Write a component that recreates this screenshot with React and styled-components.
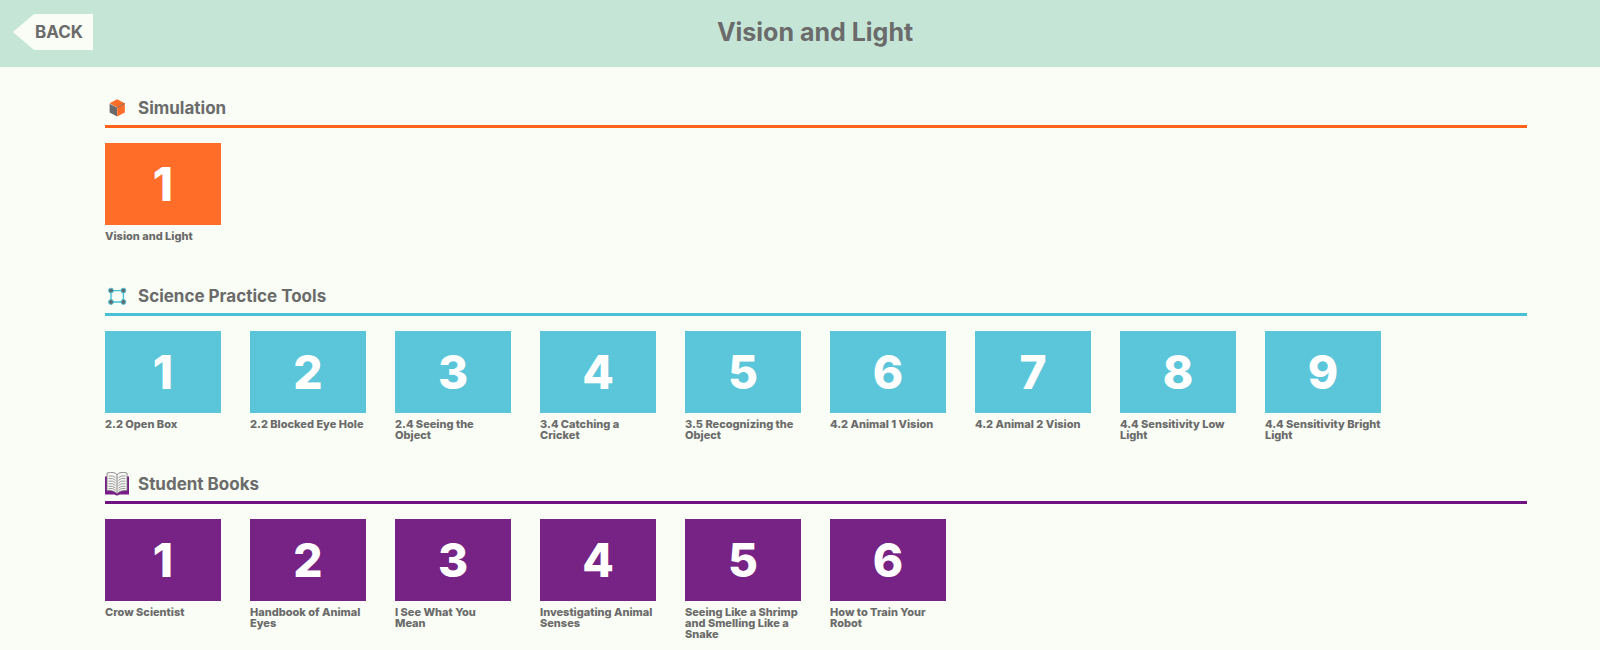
import React from "react"
import styled, { createGlobalStyle, ThemeProvider } from "styled-components"

const theme = {
    paper: "#f9fdf5",
    mint: "#c5e6d7",
    text: "#6b6b6b",
    orange: "#ff6d29",
    orangeLine: "#ff6319",
    aqua: "#5bc6d9",
    aquaLine: "#46c1d6",
    purple: "#762385",
    purpleLine: "#6f1380",
}

const GlobalStyle = createGlobalStyle`
    * {
        box-sizing: border-box;
    }

    body {
        margin: 0;
        background: ${theme.paper};
        color: ${theme.text};
        font-family: Inter, "Open Sans", sans-serif;
        font-weight: 700;
    }

    h1, h2, p, ul {
        margin: 0;
        padding: 0;
    }
`
const Header = styled.header`
    display: grid;
    grid-template-columns: 1fr auto 1fr;
    align-items: center;
    min-height: 67px;
    padding: 0 13px;
    background: ${props => props.theme.mint};
`
const BackButton = styled.button`
    justify-self: start;
    height: 36px;
    margin-bottom: 3px;
    padding: 0 10px 0 22px;
    border: 0;
    background: ${props => props.theme.paper};
    clip-path: polygon(0 50%, 21px 0, 100% 0, 100% 100%, 21px 100%);
    color: ${props => props.theme.text};
    font: inherit;
    font-size: 17px;
    cursor: pointer;
`
const Title = styled.h1`
    margin-bottom: 3px;
    padding-left: 30px;
    font-size: 25px;
    line-height: 30px;
`
const Main = styled.main`
    padding: 22px 73px 0 105px;
`
const Section = styled.section`
    padding-bottom: 13px;
`
const Heading = styled.div`
    display: flex;
    align-items: center;
    gap: 9px;
    height: 39px;
    padding-top: 2px;
    border-bottom: 3px solid ${({ theme, $color }) => theme[`${$color}Line`]};

    svg {
        flex: none;
        width: 24px;
        height: 24px;
    }

    h2 {
        font-size: 17px;
        line-height: 20px;
    }
`
const Tiles = styled.ul`
    display: flex;
    flex-wrap: wrap;
    gap: 13px 29px;
    padding-top: 15px;
    list-style: none;
`
const Tile = styled.a`
    display: block;
    width: 116px;
    color: inherit;
    text-decoration: none;
`
const Number = styled.span`
    display: flex;
    align-items: center;
    justify-content: center;
    height: 82px;
    background: ${({ theme, $color }) => theme[$color]};
    color: #fff;
    font-size: 46px;
    font-weight: 800;
`
const Caption = styled.p`
    min-height: 33px;
    margin-top: 6px;
    font-size: 11px;
    font-weight: 800;
    line-height: 11px;
    white-space: pre-line;
`

const CubeIcon = () => (
    <svg viewBox="0 0 24 24" aria-hidden="true">
        <path d="M12.2 3.2 19.8 7.2 12.2 11.4 4.6 7.2Z" fill="#ff6d29" />
        <path d="M4.6 7.8 12.2 11.8V20.6L4.6 16.6Z" fill="#6a6a6c" />
        <path d="M19.8 7.2 12.2 11.4V20.6L19.8 16.6Z" fill="#ff6d29" />
        <path d="M12.2 11.6 19.8 7.4" stroke="#776a62" strokeWidth="0.9" />
    </svg>
)

const NodesIcon = () => (
    <svg viewBox="0 0 24 24" aria-hidden="true">
        <path d="M6 6.6H18.4V18H6Z" fill="none" stroke="#46c1d6" strokeWidth="1.4" />
        {[[6, 6.6], [18.4, 6.6], [6, 18], [18.4, 18]].map(([x, y]) => (
            <circle key={`${x}-${y}`} cx={x} cy={y} r="2.4" fill="#666a6c" stroke="#46c1d6" strokeWidth="1" />
        ))}
    </svg>
)

const BookIcon = () => (
    <svg viewBox="0 0 24 24" aria-hidden="true">
        <path d="M0 4.4H24V22.6H14.6Q12 24.6 9.4 22.6H0Z" fill="#7a1b8b" />
        <path d="M2 1Q9 -0.8 12 2.6Q15 -0.8 22 1V18.6Q15.4 17.8 12 21.8Q8.6 17.8 2 18.6Z" fill="#f7f7f5" stroke="#777" strokeWidth="0.8" />
        <path d="M12 2.6V21.8" stroke="#777" strokeWidth="0.9" />
        {[4, 6.6, 9.2, 11.8, 14.4, 16.6].map(y => (
            <path
                key={y}
                d={`M3.6 ${y}Q8 ${y - 1} 10.6 ${y + 1.8}M20.4 ${y}Q16 ${y - 1} 13.4 ${y + 1.8}`}
                fill="none"
                stroke="#858585"
                strokeWidth="0.8"
            />
        ))}
    </svg>
)

const sections = [
    {
        title: "Simulation",
        color: "orange",
        Icon: CubeIcon,
        items: ["Vision and Light"],
    },
    {
        title: "Science Practice Tools",
        color: "aqua",
        Icon: NodesIcon,
        items: [
            "2.2 Open Box",
            "2.2 Blocked Eye Hole",
            "2.4 Seeing the\nObject",
            "3.4 Catching a\nCricket",
            "3.5 Recognizing the\nObject",
            "4.2 Animal 1 Vision",
            "4.2 Animal 2 Vision",
            "4.4 Sensitivity Low\nLight",
            "4.4 Sensitivity Bright\nLight",
        ],
    },
    {
        title: "Student Books",
        color: "purple",
        Icon: BookIcon,
        items: [
            "Crow Scientist",
            "Handbook of Animal\nEyes",
            "I See What You\nMean",
            "Investigating Animal\nSenses",
            "Seeing Like a Shrimp\nand Smelling Like a\nSnake",
            "How to Train Your\nRobot",
        ],
    },
]

const App = () => {
    return (
        <ThemeProvider theme={theme}>
            <GlobalStyle />
            <Header>
                <BackButton type="button">BACK</BackButton>
                <Title>Vision and Light</Title>
            </Header>
            <Main>
                {sections.map(({ title, color, Icon, items }) => (
                    <Section key={title}>
                        <Heading $color={color}>
                            <Icon />
                            <h2>{title}</h2>
                        </Heading>
                        <Tiles>
                            {items.map((item, i) => (
                                <li key={item}>
                                    <Tile href="#">
                                        <Number $color={color}>{i + 1}</Number>
                                        <Caption>{item}</Caption>
                                    </Tile>
                                </li>
                            ))}
                        </Tiles>
                    </Section>
                ))}
            </Main>
        </ThemeProvider>
    )
}

export default App
